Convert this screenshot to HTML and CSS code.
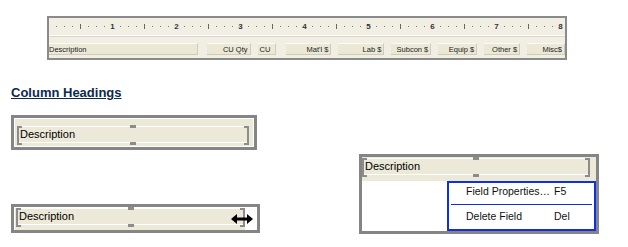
FILE: index.html
```html
<!DOCTYPE html>
<html lang="en">
<head>
  <meta charset="UTF-8">
  <title>Column Headings</title>
  <link rel="stylesheet" href="styles.css">
</head>
<body>
  <div class="layout">
    <div class="report-bar">
      <div class="ruler">
        <span class="inch"><b>1</b></span>
        <span class="inch"><b>2</b></span>
        <span class="inch"><b>3</b></span>
        <span class="inch"><b>4</b></span>
        <span class="inch"><b>5</b></span>
        <span class="inch"><b>6</b></span>
        <span class="inch"><b>7</b></span>
        <span class="inch"><b>8</b></span>
      </div>
      <div class="heading-row">
        <span class="col col-desc">Description</span>
        <span class="col col-qty right">CU Qty</span>
        <span class="col col-cu">CU</span>
        <span class="col col-mat right">Mat'l $</span>
        <span class="col col-lab right">Lab $</span>
        <span class="col col-sub right">Subcon $</span>
        <span class="col col-equip right">Equip $</span>
        <span class="col col-other right">Other $</span>
        <span class="col col-misc right">Misc$</span>
      </div>
    </div>

    <h2 class="section-title">Column Headings</h2>

    <div class="panel panel-one">
      <div class="panel-fill fill-one">
        <div class="field">
          <span class="grip grip-left"></span>
          <span class="grip grip-top"></span>
          <span class="grip grip-bottom"></span>
          <span class="grip grip-right"></span>
          Description
        </div>
      </div>
    </div>

    <div class="lower-row">
      <div class="panel panel-two">
        <div class="panel-fill fill-two">
          <div class="field">
            <span class="grip grip-left"></span>
            <span class="grip grip-top"></span>
            <span class="grip grip-bottom"></span>
            <span class="grip grip-right"></span>
            Description
          </div>
        </div>
        <svg class="resize-cursor" width="24" height="12" viewBox="0 0 24 12">
          <path d="M1 6 L7 1 L7 4.5 L17 4.5 L17 1 L23 6 L17 11 L17 7.5 L7 7.5 L7 11 Z" fill="#000"/>
        </svg>
      </div>

      <div class="panel panel-three">
        <div class="panel-fill fill-three">
          <div class="field">
            <span class="grip grip-left"></span>
            <span class="grip grip-top"></span>
            <span class="grip grip-bottom"></span>
            <span class="grip grip-right"></span>
            Description
          </div>
        </div>
        <div class="context-menu">
          <div class="menu-item"><span>Field Properties…</span><span>F5</span></div>
          <div class="menu-sep"></div>
          <div class="menu-item"><span>Delete Field</span><span>Del</span></div>
        </div>
      </div>
    </div>
  </div>
</body>
</html>
```

FILE: styles.css
```css
body {
  margin: 0;
  background: #fff;
  font-family: 'Liberation Sans', Arial, sans-serif;
  color: #000;
}

.layout {
  padding: 16px 0 0 11px;
}

/* top report bar with ruler */

.report-bar {
  width: 516px;
  margin-left: 36px;
  border: 2px solid #8a8a8a;
  background: #f1efe3;
}

.ruler {
  display: flex;
  height: 17px;
  border-bottom: 1px solid #fff;
  box-shadow: 0 1px 0 #d9d6c4;
}

.inch {
  display: flex;
  justify-content: flex-end;
  align-items: center;
  width: 64px;
  height: 17px;
  background-image:
    linear-gradient(to right, transparent 31px, #666 31px, #666 32px, transparent 32px),
    linear-gradient(to right, transparent 7px, #777 7px, #777 8px, transparent 8px);
  background-size: 64px 5px, 8px 1px;
  background-position: 0 6px, 0 8px;
  background-repeat: no-repeat, repeat-x;
}

.inch b {
  width: 7px;
  margin-right: -3px;
  background: #f1efe3;
  font-size: 8px;
  line-height: 9px;
  text-align: center;
  color: #333;
}

.heading-row {
  display: flex;
  padding: 7px 0 3px;
}

.col {
  height: 12px;
  line-height: 11px;
  padding: 0 2px;
  box-sizing: border-box;
  background: #ebe8d6;
  border-top: 1px solid #fbfaf4;
  border-bottom: 1px solid #cfcbb8;
  border-right: 1px solid #cfcbb8;
  font-size: 7.5px;
  color: #222;
  white-space: nowrap;
}

.right {
  text-align: right;
}

.col-desc { width: 149px; padding-left: 0; }
.col-qty { width: 44px; margin-left: 9px; }
.col-cu { width: 18px; margin-left: 7px; }
.col-mat { width: 46px; margin-left: 10px; }
.col-lab { width: 46px; margin-left: 7px; }
.col-sub { width: 40px; margin-left: 7px; }
.col-equip { width: 39px; margin-left: 7px; }
.col-other { width: 36px; margin-left: 7px; }
.col-misc { width: 38px; margin-left: 7px; }

/* section title */

.section-title {
  margin: 26px 0 0;
  font-size: 13px;
  line-height: 14px;
  font-weight: bold;
  color: #0d2a4a;
  text-decoration: underline;
}

/* design panels */

.panel {
  position: relative;
  border: 3px solid #858585;
  background: #fff;
}

.panel-fill {
  background: #ece9d8;
}

.panel-one {
  width: 238px;
  margin-top: 15px;
  padding: 1px;
}

.fill-one {
  padding: 7px 4px 3px 2px;
}

.lower-row {
  display: flex;
  align-items: flex-end;
  margin-top: 4px;
}

.panel-two {
  width: 242px;
  margin-bottom: 1px;
  padding: 1px 0 0 1px;
}

.fill-two {
  width: 229px;
  padding: 0 0 5px 1px;
}

.panel-three {
  width: 234px;
  margin-left: 99px;
}

.fill-three {
  padding: 1px 6px 6px 0;
}

.field {
  position: relative;
  height: 15px;
  line-height: 15px;
  padding-left: 3px;
  border-top: 1px solid #fff;
  border-bottom: 1px solid #fff;
  font-size: 11px;
}

.grip {
  position: absolute;
  border-color: #8c8c8c;
  border-style: solid;
}

.grip-left {
  left: 0;
  top: -1px;
  width: 3px;
  height: 15px;
  border-width: 2px 0 2px 2px;
}

.grip-right {
  right: 0;
  top: -1px;
  width: 3px;
  height: 15px;
  border-width: 2px 2px 2px 0;
}

.grip-top,
.grip-bottom {
  left: 50%;
  width: 4px;
  height: 1px;
  margin-left: -3px;
  border-width: 1px;
  background: #8c8c8c;
}

.grip-top { top: -2px; }
.grip-bottom { bottom: -3px; }

.resize-cursor {
  position: absolute;
  left: 216px;
  top: 6px;
}

/* context menu */

.context-menu {
  width: 145px;
  height: 46px;
  margin: 0 0 0 85px;
  border: 2px solid #1030e0;
  background: #fff;
}

.menu-item {
  display: grid;
  grid-template-columns: 88px auto;
  padding-left: 17px;
  font-size: 10.5px;
  line-height: 18px;
  color: #111;
}

.menu-item:first-child {
  margin-top: -1px;
}

.menu-sep {
  height: 1px;
  margin: 4px 2px 2px;
  background: #1030e0;
}
```
